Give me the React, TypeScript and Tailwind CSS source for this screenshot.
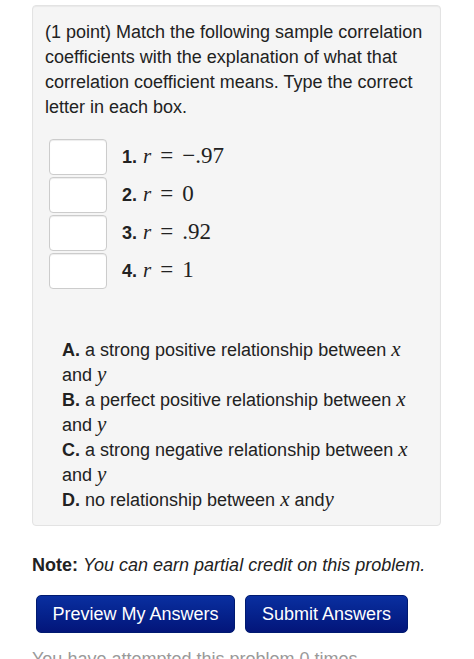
import React from 'react';

const M = ({ children }: { children: React.ReactNode }) => (
  <span className="font-['Liberation_Serif',serif] text-[23px] leading-none">{children}</span>
);
const V = ({ children }: { children: React.ReactNode }) => (
  <span className="font-['Liberation_Serif',serif] italic text-[21px] leading-none">{children}</span>
);

const rows = [
  { n: '1.', v: '\u2212.97' },
  { n: '2.', v: '0' },
  { n: '3.', v: '.92' },
  { n: '4.', v: '1' },
];

const App = () => {
  return (
    <div className="min-h-screen bg-white font-['Liberation_Sans',Arial,sans-serif] text-[#222] text-[18px] leading-[25px] overflow-hidden">
      <div className="pl-[32px] pt-[5px]">
        <div className="w-[409px] bg-[#f5f5f5] border border-[#e3e3e3] rounded-[4px] shadow-[inset_0_1px_1px_rgba(0,0,0,0.05)] pl-[12px] pr-[12px] pt-[14px] pb-[12px]">
          <p>
            (1 point) Match the following sample correlation coefficients with the explanation of what that
            correlation coefficient means. Type the correct letter in each box.
          </p>

          {/* answer boxes */}
          <div className="mt-[19px] ml-[4px] flex flex-col gap-[2px]">
            {rows.map((r) => (
              <div key={r.n} className="flex items-center">
                <input
                  type="text"
                  className="w-[58px] h-[36px] bg-white border border-[#cccccc] rounded-[4px] shadow-[inset_0_1px_1px_rgba(0,0,0,0.075)]"
                />
                <span className="ml-[15px] font-bold">{r.n}</span>
                <span className="ml-[6px] flex items-baseline">
                  <V>r</V>
                  <span className="mx-[9px]">
                    <M>=</M>
                  </span>
                  <M>{r.v}</M>
                </span>
              </div>
            ))}
          </div>

          {/* explanations */}
          <div className="mt-[49px] ml-[17px]">
            <div>
              <b>A.</b> a strong positive relationship between <V>x</V> and <V>y</V>
            </div>
            <div>
              <b>B.</b> a perfect positive relationship between <V>x</V> and <V>y</V>
            </div>
            <div>
              <b>C.</b> a strong negative relationship between <V>x</V> and <V>y</V>
            </div>
            <div>
              <b>D.</b> no relationship between <V>x</V> and<V>y</V>
            </div>
          </div>
        </div>
      </div>

      <div className="px-[32px] mt-[27px]">
        <p>
          <b>Note:</b> <i>You can earn partial credit on this problem.</i>
        </p>
        <div className="mt-[17px] ml-[4px] flex gap-[10px]">
          <button className="h-[38px] w-[199px] rounded-[5px] border border-[#001a70] bg-gradient-to-b from-[#0a2fa0] to-[#03157a] text-white text-[18px]">
            Preview My Answers
          </button>
          <button className="h-[38px] w-[163px] rounded-[5px] border border-[#001a70] bg-gradient-to-b from-[#0a2fa0] to-[#03157a] text-white text-[18px]">
            Submit Answers
          </button>
        </div>
        <p className="mt-[14px] text-[#999]">You have attempted this problem 0 times.</p>
      </div>
    </div>
  );
};

export default App;
